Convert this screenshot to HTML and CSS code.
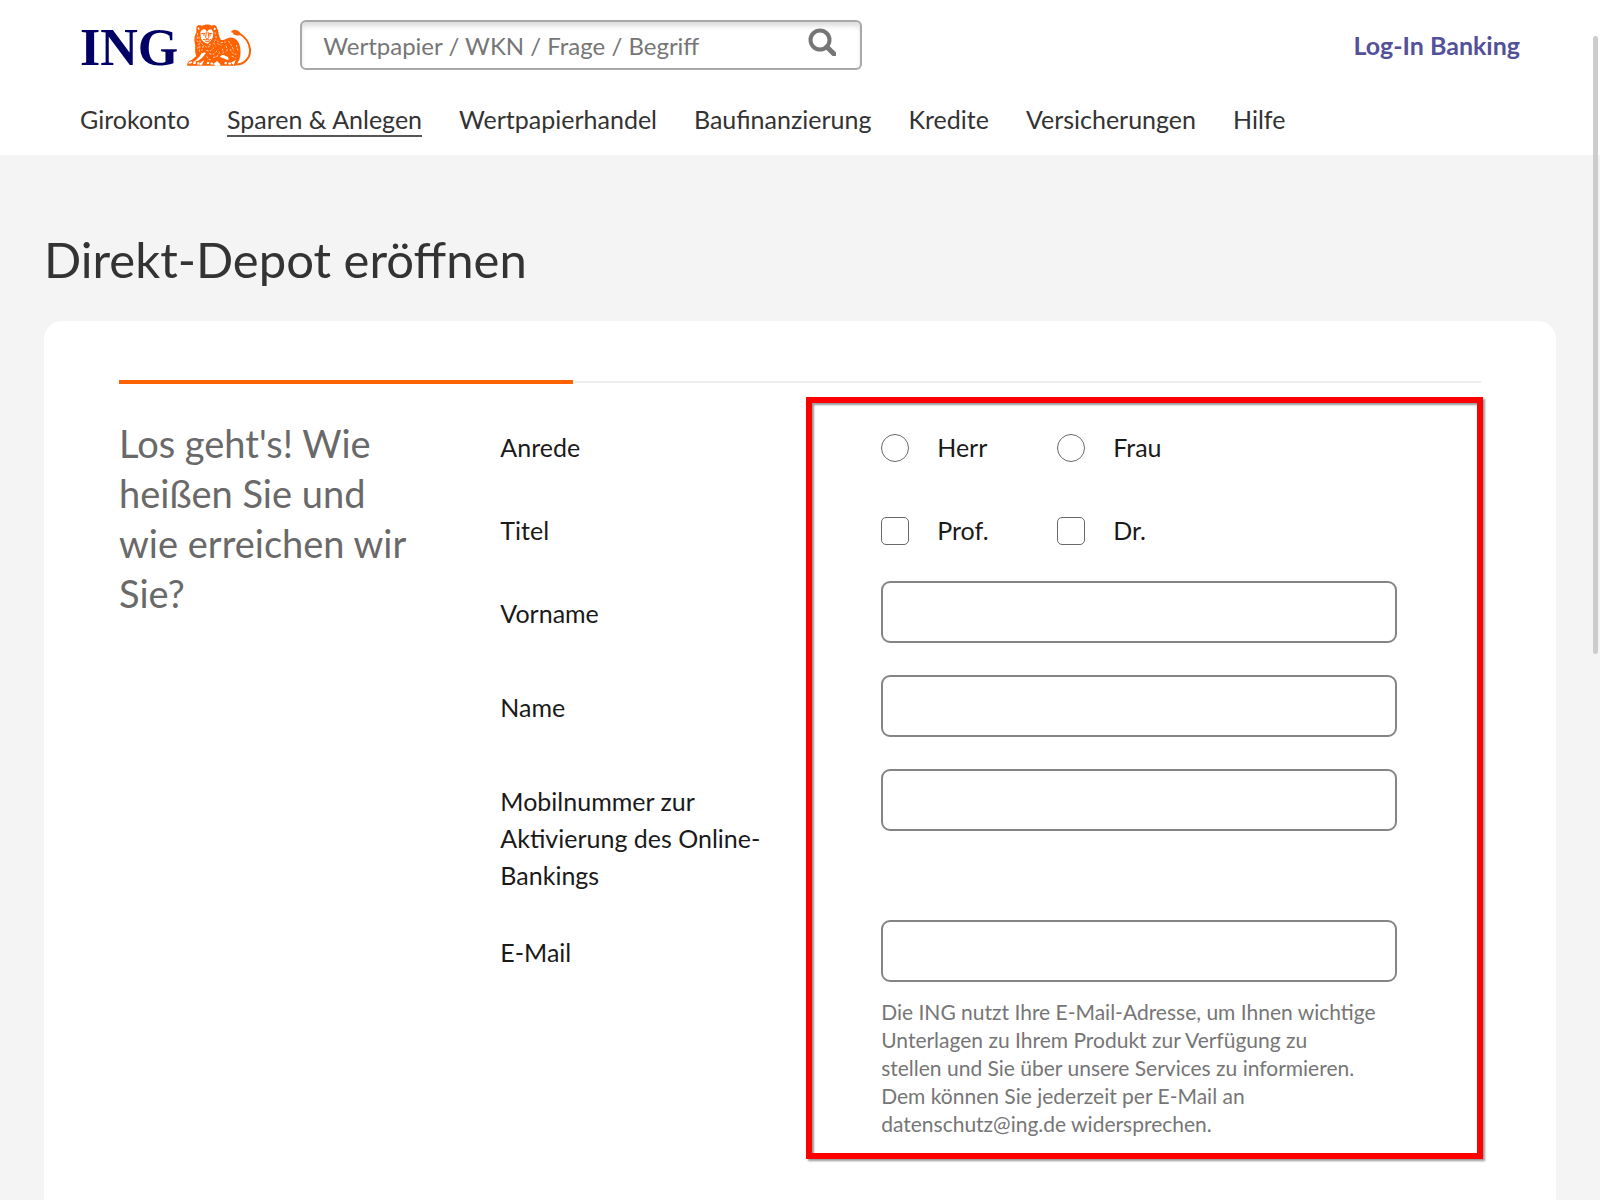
FILE: index.html
```html
<!DOCTYPE html>
<html lang="de">
<head>
  <meta charset="UTF-8">
  <meta name="viewport" content="width=device-width, initial-scale=1.0">
  <title>Direkt-Depot eröffnen - ING</title>
  <link rel="stylesheet" href="styles.css">
</head>
<body>
  <header class="header">
    <div class="header-top">
      <a class="logo" href="#" aria-label="ING">
        <span class="logo-text">ING</span>
        <svg class="logo-lion" viewBox="0 0 198 130" aria-hidden="true">
          <path fill="none" stroke="#ff6200" stroke-width="6" d="M144 123C176 126 194 102 192 78C190 56 176 40 158 29"/>
          <path fill="#ff6200" d="M135 27C137 20 146 17 152 21C160 23 164 29 162 35C156 38 150 36 147 34C142 35 139 32 143 29Z"/>
          <path fill="#ff6200" d="M31 14C32 4 42 2 48 8C56 2 69 2 77 7C85 2 93 6 93 15C98 22 97 29 99 36L104 49C115 53 120 44 130 43C149 41 160 55 163 75C165 94 162 109 155 118L146 127H4C2 120 7 112 17 110L31 98C25 83 29 73 27 62C23 49 26 36 31 27Z"/>
          <g fill="#fff">
            <path d="M40 14C37 11 34 14 36 18L40 20ZM84 14C88 11 91 15 88 19L83 20Z"/>
            <path d="M43 27C47 18 54 15 60 20L63 26L67 20C74 15 80 20 82 29L80 44L73 54L64 61L53 56L45 46Z"/>
            <path d="M43 96C47 89 54 86 60 89L48 104L35 113H27C34 107 39 102 43 96Z"/>
            <path d="M102 101C107 94 114 94 119 98C126 99 129 105 127 111L112 105Z"/>
            <path d="M7 121C8 115 14 113 19 115L17 120ZM21 122L23 114L30 114L29 122ZM33 123L35 115L41 118L40 124ZM62 122L64 115L70 116L69 122ZM73 123L75 117L82 119L80 124ZM115 122L117 115L123 116L122 123ZM126 123L129 117L136 119L134 124Z"/>
            <path d="M42 119L55 110L47 126H41ZM82 122L93 113L103 123V128H89ZM135 118L149 110L143 125Z"/>
          </g>
          <g fill="none" stroke="#ff6200" stroke-width="3">
            <path d="M46 31L57 30M68 30L79 31M51 35H57M69 35H75M61 25L59 43L64 47L69 43L66 26M51 48L60 50L64 47L70 51L76 47M58 54H70"/>
          </g>
          <g fill="none" stroke="#fff" stroke-width="2" stroke-dasharray="7 4">
            <path d="M35 29L33 51L40 61L35 76M38 40L43 57L53 66L47 82M87 27L91 45L83 59L89 69M57 68L64 73L73 67M42 68L40 84L48 91M61 81L72 84L84 73M69 91L82 93L97 79M81 102L92 101L101 87M62 99L69 109L79 109M94 61L107 66M104 58L119 56M127 53L138 68L143 83M120 67L124 80L119 88M132 77L141 91L151 93M108 76L113 85L110 91M137 98L149 104M151 65L156 82M68 62L80 66M93 51L99 58"/>
          </g>
        </svg>
      </a>
      <form class="search" role="search">
        <input class="search-input" type="search" placeholder="Wertpapier / WKN / Frage / Begriff" aria-label="Suche">
        <button class="search-button" type="button" aria-label="Suchen">
          <svg class="search-icon" viewBox="0 0 28 28" aria-hidden="true">
            <circle cx="12" cy="12" r="9.5" fill="none" stroke="#767676" stroke-width="4"/>
            <path d="M19 19L26 26" fill="none" stroke="#767676" stroke-width="5" stroke-linecap="round"/>
          </svg>
        </button>
      </form>
      <a class="login" href="#">Log-In Banking</a>
    </div>
    <nav class="nav">
      <a class="nav-link" href="#">Girokonto</a>
      <a class="nav-link active" href="#">Sparen &amp; Anlegen</a>
      <a class="nav-link" href="#">Wertpapierhandel</a>
      <a class="nav-link" href="#">Baufinanzierung</a>
      <a class="nav-link" href="#">Kredite</a>
      <a class="nav-link" href="#">Versicherungen</a>
      <a class="nav-link" href="#">Hilfe</a>
    </nav>
  </header>

  <main class="main">
    <h1 class="title">Direkt-Depot eröffnen</h1>
    <section class="card">
      <div class="progress"><div class="progress-bar"></div></div>
      <div class="content">
        <h2 class="intro">Los geht's! Wie heißen Sie und wie erreichen wir Sie?</h2>
        <form class="form">
          <div class="row" role="group" aria-labelledby="anrede">
            <span class="label" id="anrede">Anrede</span>
            <div class="choices">
              <label class="choice"><input class="radio" type="radio" name="anrede"> Herr</label>
              <label class="choice"><input class="radio" type="radio" name="anrede"> Frau</label>
            </div>
          </div>
          <div class="row" role="group" aria-labelledby="titel">
            <span class="label" id="titel">Titel</span>
            <div class="choices">
              <label class="choice"><input class="checkbox" type="checkbox" name="prof"> Prof.</label>
              <label class="choice"><input class="checkbox" type="checkbox" name="dr"> Dr.</label>
            </div>
          </div>
          <div class="row">
            <label class="label" for="vorname">Vorname</label>
            <div class="field"><input class="input" id="vorname" type="text"></div>
          </div>
          <div class="row">
            <label class="label" for="name">Name</label>
            <div class="field"><input class="input" id="name" type="text"></div>
          </div>
          <div class="row">
            <label class="label" for="mobil">Mobilnummer zur Aktivierung des Online-Bankings</label>
            <div class="field"><input class="input" id="mobil" type="tel"></div>
          </div>
          <div class="row">
            <label class="label" for="email">E-Mail</label>
            <div class="field">
              <input class="input" id="email" type="email" aria-describedby="email-hint">
              <p class="hint" id="email-hint">
                Die ING nutzt Ihre E-Mail-Adresse, um Ihnen wichtige<br>
                Unterlagen zu Ihrem Produkt zur Verfügung zu<br>
                stellen und Sie über unsere Services zu informieren.<br>
                Dem können Sie jederzeit per E-Mail an<br>
                datenschutz@ing.de widersprechen.
              </p>
            </div>
          </div>
          <div class="highlight"></div>
        </form>
      </div>
    </section>
  </main>
  <div class="scroll-thumb"></div>
</body>
</html>
```
FILE: styles.css
```css
* {
  box-sizing: border-box;
}
body {
  margin: 0;
  min-height: 100vh;
  display: flex;
  flex-direction: column;
  background-color: #f4f4f4;
  color: #1a1a1a;
  font-family: Lato, "Noto Sans", sans-serif;
  font-size: 25px;
}
a {
  color: inherit;
  text-decoration: none;
}

/* Header */
.header {
  background-color: #ffffff;
  padding: 20px 80px 18px;
}
.header-top {
  display: flex;
  align-items: center;
}
.logo {
  display: flex;
  align-items: center;
  gap: 8px;
  margin-right: 48px;
}
.logo-text {
  color: #000066;
  font-family: "Liberation Serif", serif;
  font-size: 52px;
  font-weight: bold;
  line-height: 44px;
  padding-top: 6px;
}
.logo-lion {
  width: 66px;
  height: 44px;
}
.search {
  display: flex;
  align-items: center;
  flex: 0 1 562px;
  height: 50px;
  border: 2px solid #a8a8a8;
  border-radius: 6px;
  box-shadow: inset 0 5px 5px -1px #dddddd;
}
.search-input {
  flex: 1;
  min-width: 0;
  border: none;
  outline: none;
  background: none;
  padding: 0 0 0 21px;
  font: inherit;
  font-size: 24px;
}
.search-input::placeholder {
  color: #767676;
}
.search-button {
  display: flex;
  border: none;
  background: none;
  padding: 0 24px 6px;
  cursor: pointer;
}
.search-icon {
  width: 28px;
  height: 28px;
}
.login {
  margin-left: auto;
  color: #525199;
  font-weight: bold;
}
.nav {
  display: flex;
  gap: 37px;
  margin-top: 33px;
  color: #333333;
}
.nav-link {
  line-height: 32px;
  border-bottom: 2px solid transparent;
}
.nav-link.active {
  border-color: #555555;
}

/* Page */
.main {
  flex: 1;
  display: flex;
  flex-direction: column;
  padding: 74px 44px 0;
}
.title {
  margin: 0 0 32px;
  color: #333333;
  font-size: 49px;
  font-weight: 400;
  line-height: 60px;
}
.card {
  flex: 1;
  padding: 59px 75px 40px;
  background-color: #ffffff;
  border-radius: 18px 18px 0 0;
}
.progress {
  height: 4px;
  background: linear-gradient(#eeeeee, #eeeeee) center / 100% 2px no-repeat;
}
.progress-bar {
  width: 33.3%;
  height: 100%;
  background-color: #ff6200;
}
.content {
  display: grid;
  grid-template-columns: 28% 72%;
  padding-top: 31px;
}
.intro {
  margin: 0;
  padding: 3px 76px 0 0;
  color: #696969;
  font-size: 38px;
  font-weight: 400;
  line-height: 50px;
}

/* Form */
.form {
  position: relative;
}
.row {
  display: grid;
  grid-template-columns: 381fr 600fr;
  padding-bottom: 26px;
}
.label {
  padding: 14px 76px 0 0;
  line-height: 37px;
}
.choices {
  display: flex;
  padding: 14px 0 6px;
}
.choice {
  display: flex;
  align-items: center;
  gap: 28px;
  width: 176px;
  line-height: 37px;
}
.radio,
.checkbox {
  appearance: none;
  width: 28px;
  height: 28px;
  margin: 0;
  border: 1px solid #696969;
  background-color: #ffffff;
}
.radio {
  border-radius: 50%;
}
.checkbox {
  border-radius: 5px;
}
.radio:checked,
.checkbox:checked {
  background-color: #ff6200;
}
.field {
  padding: 0 84px 6px 0;
}
.input {
  display: block;
  width: 100%;
  height: 62px;
  padding: 0 16px;
  border: 2px solid #858585;
  border-radius: 9px;
  background-color: #ffffff;
  font: inherit;
}
.hint {
  margin: 16px 0 0;
  color: #767676;
  font-size: 21px;
  line-height: 28px;
}
.highlight {
  position: absolute;
  top: -18px;
  right: -2px;
  bottom: 11px;
  left: 306px;
  border: 6px solid #ff0000;
  box-shadow: 2px 2px 2px #999999, inset 2px 2px 2px #999999;
  pointer-events: none;
}
.scroll-thumb {
  position: absolute;
  top: 36px;
  right: 2px;
  width: 5px;
  height: 618px;
  border-radius: 3px;
  background-color: #cccccc;
}
```
